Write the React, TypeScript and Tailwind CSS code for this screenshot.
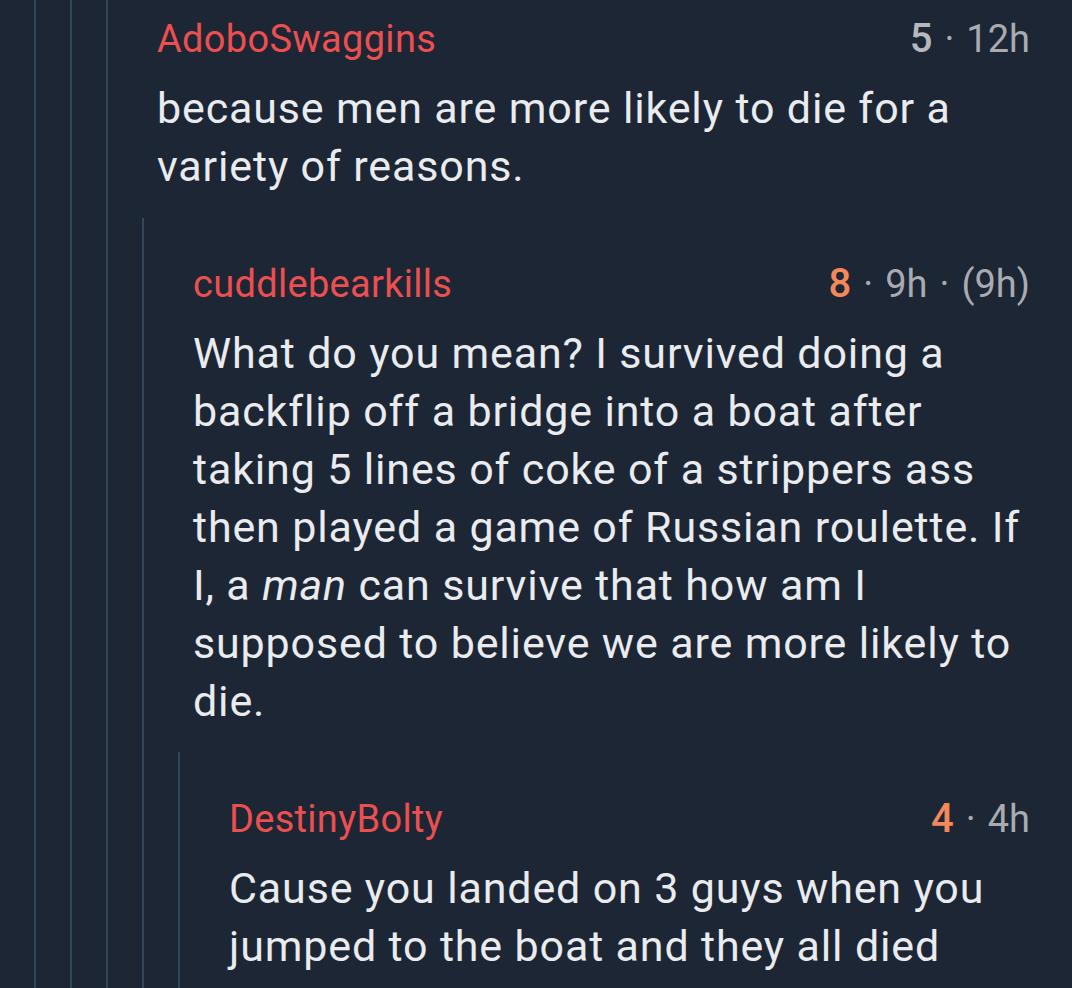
import { ReactNode } from 'react';

type Comment = {
  author: string;
  score: number;
  hot?: boolean;
  age: string;
  edited?: string;
  body: ReactNode;
};

function CommentHeader({ c }: { c: Comment }) {
  return (
    <div className="flex items-baseline justify-between text-[38px] leading-[48px]">
      <span className="tracking-[0.3px] text-[#ec4f4f]">{c.author}</span>
      <span className="text-[#a8acb2]">
        <span className={`font-medium text-[40px] ${c.hot ? 'text-[#f4885a]' : 'text-[#b5b9be]'}`}>{c.score}</span>
        <span className="mx-[12px]">·</span>
        {c.age}
        {c.edited && (
          <>
            <span className="mx-[12px]">·</span>({c.edited})
          </>
        )}
      </span>
    </div>
  );
}

function CommentBody({ children }: { children: ReactNode }) {
  return (
    <p className="mt-[16px] text-[43px] leading-[58px] tracking-[0.85px] text-[#e9ebee]">{children}</p>
  );
}

const top: Comment = {
  author: 'AdoboSwaggins',
  score: 5,
  age: '12h',
  body: 'because men are more likely to die for a variety of reasons.',
};

const reply: Comment = {
  author: 'cuddlebearkills',
  score: 8,
  hot: true,
  age: '9h',
  edited: '9h',
  body: (
    <>
      What do you mean? I survived doing a backflip off a bridge into a boat after taking 5 lines of coke of a
      strippers ass then played a game of Russian roulette. If I, a <em>man</em> can survive that how am I supposed
      to believe we are more likely to die.
    </>
  ),
};

const last: Comment = {
  author: 'DestinyBolty',
  score: 4,
  hot: true,
  age: '4h',
  body: 'Cause you landed on 3 guys when you jumped to the boat and they all died',
};

export default function App() {
  return (
    <div
      className="h-[988px] overflow-hidden bg-[#1c2634] pl-[34px] pr-[42px]"
      style={{ fontFamily: 'Roboto, "Noto Sans", sans-serif' }}
    >
      <div className="h-full border-l-2 border-[#33465a] pl-[34px]">
        <div className="h-full border-l-2 border-[#33465a] pl-[34px]">
          <div className="h-full border-l-2 border-[#33465a] pl-[34px]">
            {/* top level comment */}
            <div className="pl-[15px] pt-[15px]">
              <CommentHeader c={top} />
              <CommentBody>{top.body}</CommentBody>
            </div>

            <div className="mt-[23px] h-full border-l-2 border-[#33465a] pl-[34px]">
              <div className="pl-[15px] pt-[42px]">
                <CommentHeader c={reply} />
                <CommentBody>{reply.body}</CommentBody>
              </div>

              <div className="mt-[22px] h-full border-l-2 border-[#33465a] pl-[34px]">
                <div className="pl-[15px] pt-[43px]">
                  <CommentHeader c={last} />
                  <CommentBody>{last.body}</CommentBody>
                </div>
              </div>
            </div>
          </div>
        </div>
      </div>
    </div>
  );
}
